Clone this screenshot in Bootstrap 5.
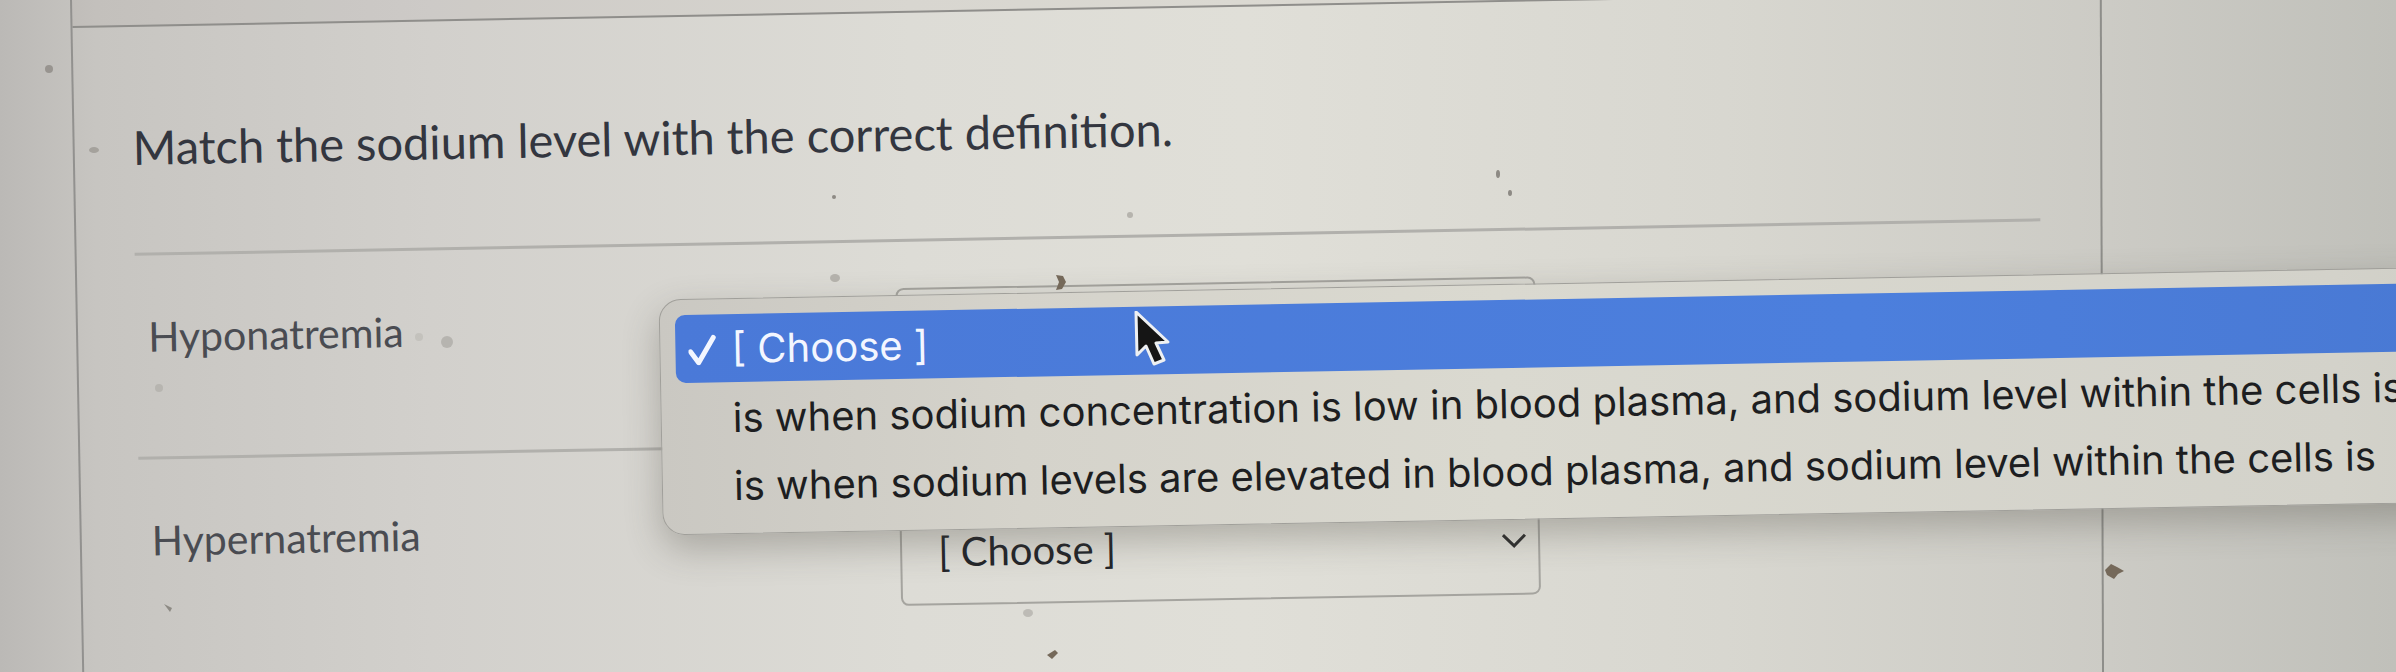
<!DOCTYPE html>
<html lang="en">
<head>
<meta charset="utf-8">
<meta name="viewport" content="width=device-width, initial-scale=1">
<title>Quiz question</title>
<link href="https://cdn.jsdelivr.net/npm/bootstrap@5.3.0/dist/css/bootstrap.min.css" rel="stylesheet">
<style>
  body {
    min-height: 100vh;
    overflow: hidden;
    background: linear-gradient(90deg, #bbb9b6 0%, #c7c5c1 4%, #d2d0cc 18%, #dddcd6 38%, #e0dfd8 52%, #d8d7d0 72%, #cccbc5 88%, #c0c0ba 100%);
    color: #2d3038;
    font-family: Lato, sans-serif;
  }
  /* the page is seen at a slight tilt */
  .quiz-sheet {
    margin-left: 70px;
    width: 84.8%;
    min-height: 115vh;
    border-left: 2px solid #92918f;
    transform: rotate(-1.04deg);
    transform-origin: left top;
  }
  .sheet-edge {
    top: 0;
    right: 0;
    width: 2px;
    height: 100%;
    background: #8e8e8a;
    transform: rotate(0.85deg);
    transform-origin: center top;
  }
  .sheet-head { height: 28px; background: rgba(90, 88, 82, .04); border-bottom: 2px solid #8f8e8b; }
  .question { padding: 92px 66px 0 58px; }
  .prompt { font-size: 47px; line-height: 56px; margin: 0 0 78px; color: #33363f; }
  .match-row { border-top: 3px solid #b1b0ac; padding: 46px 0 0 12px; height: 204px; }
  .match-term { width: 39.5%; padding-top: 11px; }
  .match-term label { font-size: 41px; line-height: 48px; color: #4a4c52; }
  .answer { width: 640px; }
  .answer .form-select {
    height: 114px;
    font-size: 40px;
    line-height: 48px;
    padding: 6px 64px 0 36px;
    color: #23252a;
    border: 2px solid #a5a49f;
    border-radius: 8px;
    background-color: transparent;
    background-image: url("data:image/svg+xml,%3Csvg xmlns='http://www.w3.org/2000/svg' viewBox='0 0 26 16'%3E%3Cpath d='M2 2l11 11L24 2' fill='none' stroke='%23303030' stroke-width='3'/%3E%3C/svg%3E");
    background-size: 26px 16px;
    background-position: right 11px top 50px;
  }
  .choices {
    top: 7px;
    left: -237px;
    width: 100vw;
    padding: 15px;
    border: 1px solid #a09f9a;
    border-radius: 22px;
    background: linear-gradient(90deg, #cac8c2 0%, #d5d3cb 15%, #dad9d0 35%, #d3d2ca 70%, #bebeb8 100%);
    box-shadow: 0 14px 36px rgba(70, 68, 60, .32);
    font-family: Inter, "Liberation Sans", sans-serif;
  }
  .choices .dropdown-item {
    height: 68px;
    padding: 2px 13px 0;
    font-size: 40px;
    line-height: 68px;
    color: #1d1e21;
    white-space: nowrap;
  }
  .choices .dropdown-item.active { background: linear-gradient(90deg, #4a79d8, #4c7fdd 50%, #4673ca); color: #f3f6ff; border-radius: 10px; }
  .tick { width: 43px; flex: none; }
  .pointer { left: 1123px; top: 311px; }
  .dust { inset: 0; pointer-events: none; }
</style>
</head>
<body>
<main class="quiz-sheet position-relative">
  <div class="sheet-edge position-absolute"></div>
  <div class="sheet-head"></div>
  <form class="question">
    <h1 class="prompt fw-normal">Match the sodium level with the correct definition.</h1>

    <div class="match-row d-flex align-items-start position-relative z-1">
      <div class="match-term"><label for="hypo">Hyponatremia</label></div>
      <div class="answer position-relative">
        <select class="form-select" id="hypo"><option></option></select>
        <div class="choices position-absolute" role="listbox" aria-label="Definitions">
          <button type="button" role="option" aria-selected="true" class="dropdown-item active d-flex align-items-center">
            <span class="tick d-flex"><svg width="28" height="32" viewBox="0 0 28 32" aria-hidden="true"><path d="M2 18l8 11L25 4" fill="none" stroke="#f3f6ff" stroke-width="5" stroke-linecap="round" stroke-linejoin="round"/></svg></span>[ Choose ]
          </button>
          <button type="button" role="option" aria-selected="false" class="dropdown-item d-flex"><span class="tick"></span>is when sodium concentration is low in blood plasma, and sodium level within the cells is</button>
          <button type="button" role="option" aria-selected="false" class="dropdown-item d-flex"><span class="tick"></span>is when sodium levels are elevated in blood plasma, and sodium level within the cells is</button>
        </div>
      </div>
    </div>

    <div class="match-row d-flex align-items-start">
      <div class="match-term"><label for="hyper">Hypernatremia</label></div>
      <div class="answer">
        <select class="form-select" id="hyper"><option>[ Choose ]</option></select>
      </div>
    </div>
  </form>
</main>

<svg class="dust position-absolute z-2" width="2396" height="672" aria-hidden="true">
  <g fill="#8d8a84">
    <ellipse cx="49" cy="69" rx="4" ry="4" opacity=".8"/><ellipse cx="94" cy="150" rx="5" ry="3" opacity=".6"/>
    <ellipse cx="447" cy="342" rx="6" ry="6" opacity=".4"/><ellipse cx="419" cy="337" rx="4" ry="4" opacity=".2"/>
    <ellipse cx="835" cy="278" rx="5" ry="4" opacity=".5"/><ellipse cx="159" cy="388" rx="4" ry="4" opacity=".3"/>
    <path d="M164 604l8 4-2 4z"/><ellipse cx="834" cy="197" rx="2" ry="2"/>
    <ellipse cx="1498" cy="174" rx="2" ry="4"/><ellipse cx="1510" cy="193" rx="2" ry="3"/>
    <ellipse cx="1130" cy="215" rx="3" ry="3" opacity=".5"/><ellipse cx="1028" cy="613" rx="5" ry="4" opacity=".4"/>
  </g>
  <g fill="#75695a">
    <path d="M1056 275l7 1 3 6-4 7-6 1 3-8z"/><path d="M1047 655l8-5 3 3-6 6z"/>
    <path d="M2105 570l6-6 6 3 7 4-6 3-4 5-7-4z"/>
  </g>
</svg>
<svg class="pointer position-absolute z-3" width="60" height="60" viewBox="-12 0 60 60" aria-hidden="true">
  <path d="M1 1l1 43 9-9 8 18 10-4-8-17 12-1z" fill="#151515" stroke="#eef0f2" stroke-width="3" stroke-linejoin="round"/>
</svg>
<script src="https://cdn.jsdelivr.net/npm/bootstrap@5.3.0/dist/js/bootstrap.bundle.min.js"></script>
</body>
</html>
